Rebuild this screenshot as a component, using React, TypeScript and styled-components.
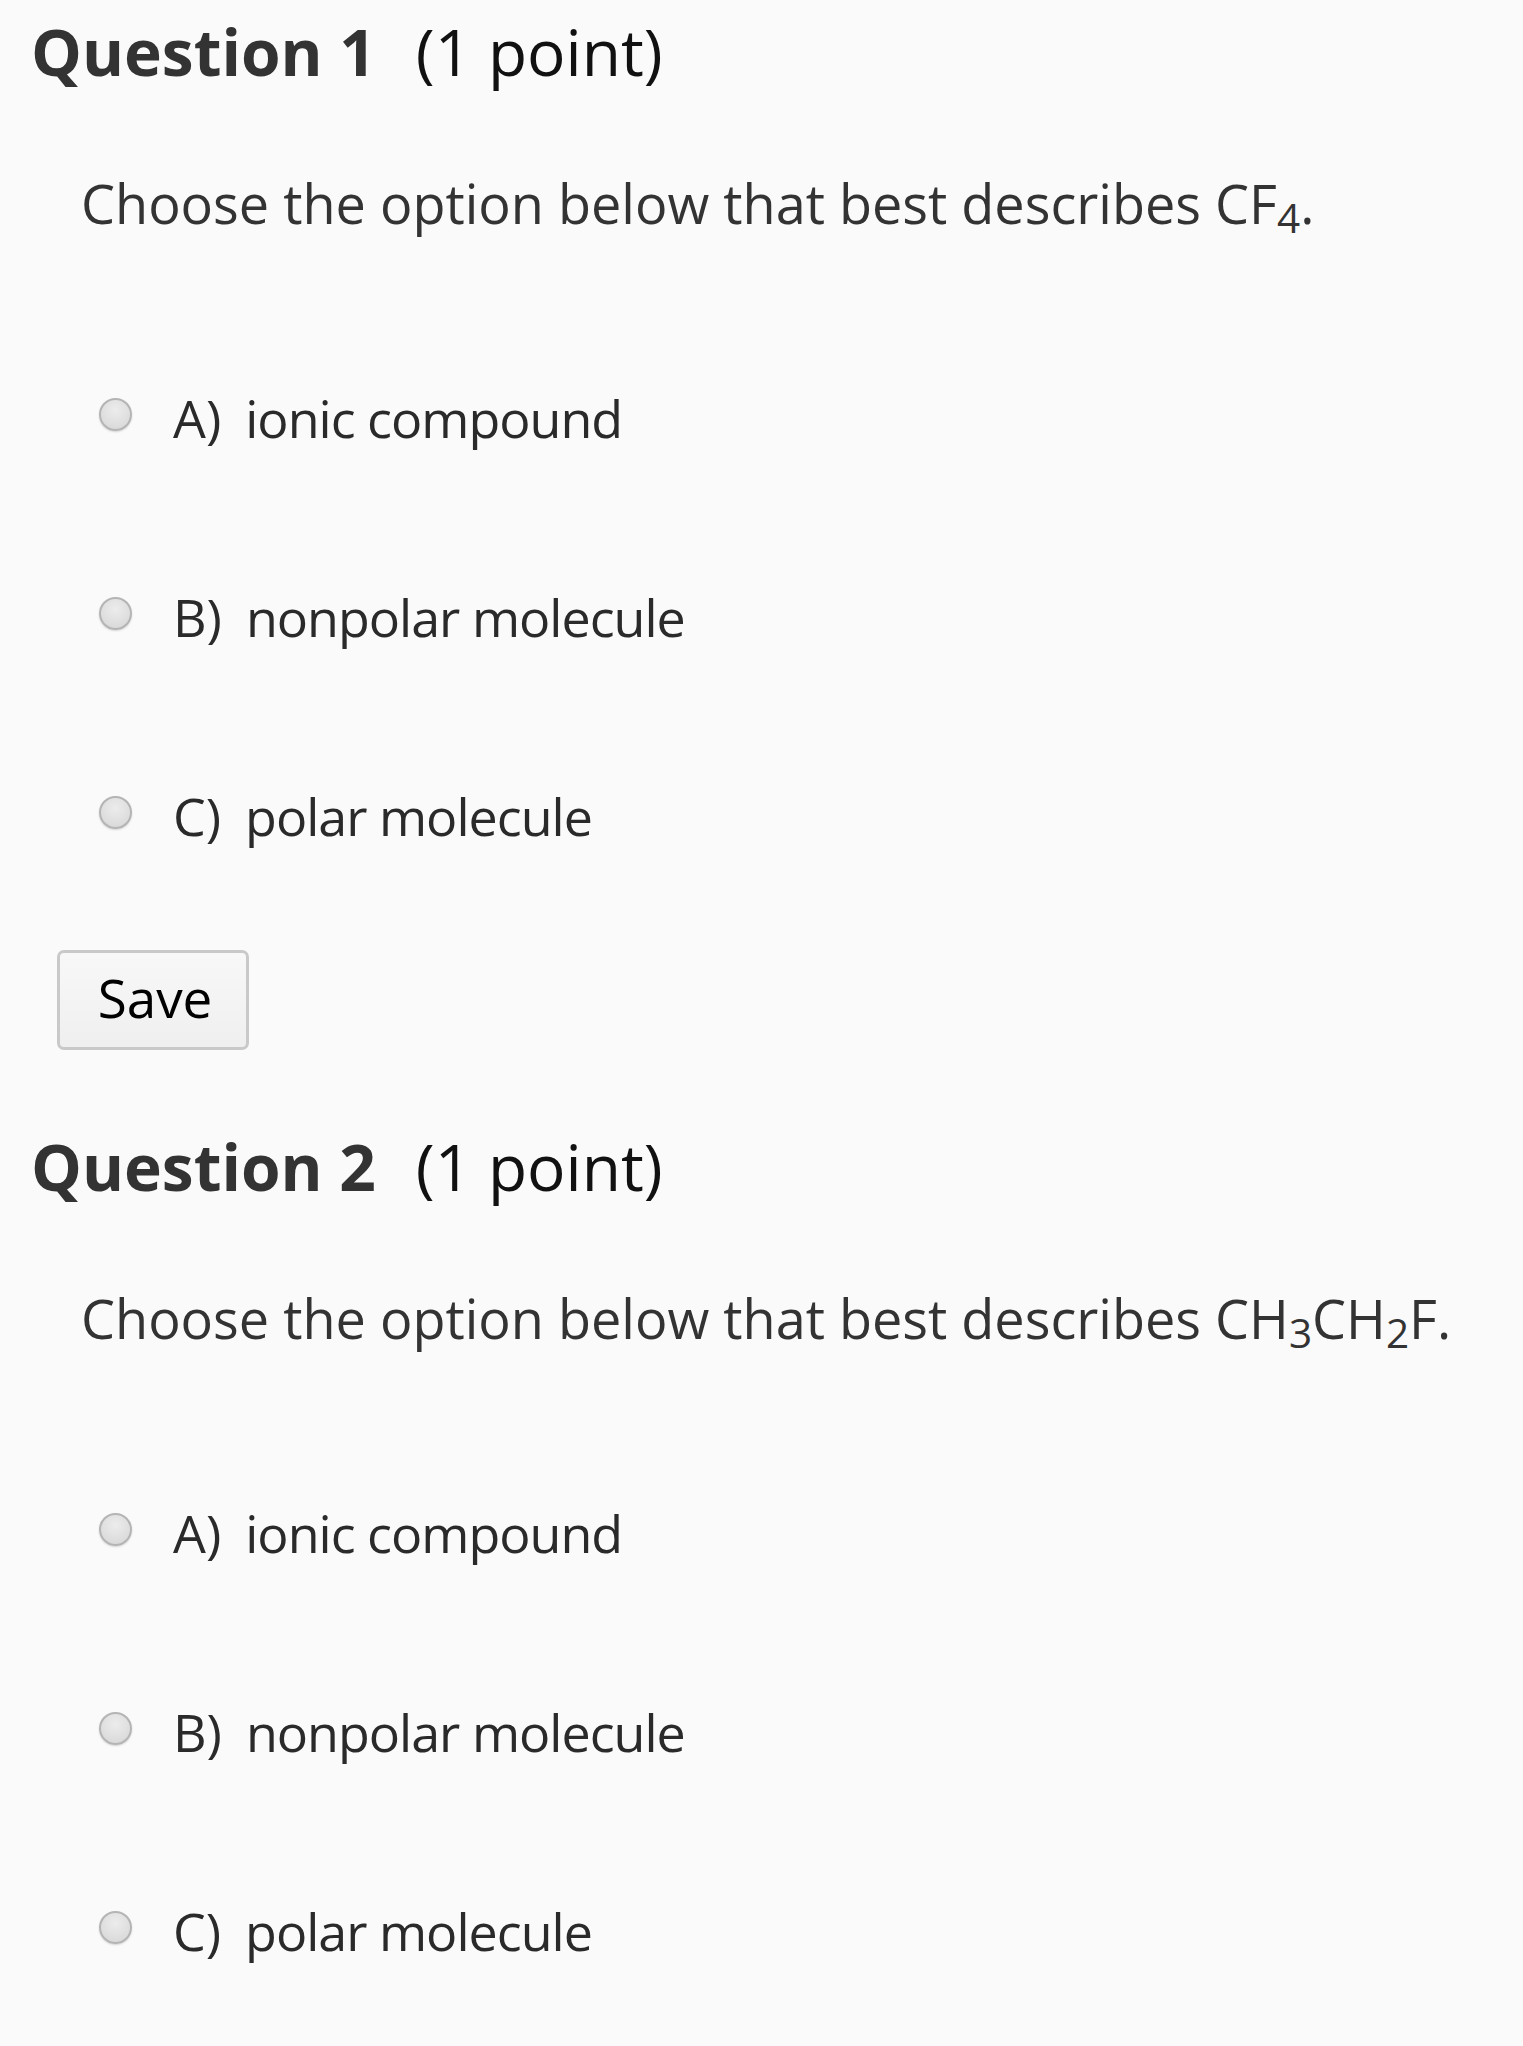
import React from "react";
import styled, { createGlobalStyle } from "styled-components";

const GlobalStyle = createGlobalStyle`
  html, body {
    margin: 0;
    padding: 0;
    background: #fafafa;
  }
  body {
    font-family: "Open Sans", "DejaVu Sans", sans-serif;
    color: #333;
  }
`;

const Page = styled.main`
  display: flex;
  flex-direction: column;
  align-items: flex-start;
  padding: 12px 0 40px 31px;
`;

const Question = styled.section<{ $first?: boolean }>`
  display: flex;
  flex-direction: column;
  align-items: flex-start;
  margin-top: ${(p) => (p.$first ? "0" : "77px")};
`;

const Heading = styled.h2`
  margin: 0;
  font-size: 64px;
  line-height: 80px;
  font-weight: 700;
  color: #333;
  white-space: nowrap;
`;

const Points = styled.span`
  font-weight: 400;
  color: #111;
  margin-left: 40px;
`;

const Prompt = styled.p`
  margin: 76px 0 0 50px;
  font-size: 54px;
  line-height: 70px;
  color: #333;
  white-space: nowrap;

  sub {
    font-size: 0.75em;
    line-height: 0;
    vertical-align: -0.22em;
  }
`;

const Options = styled.div`
  display: flex;
  flex-direction: column;
  gap: 129px;
  margin: 145px 0 0 68px;
`;

const OptionRow = styled.label`
  display: flex;
  align-items: flex-start;
  gap: 41px;
  font-size: 52px;
  line-height: 70px;
  color: #2a2a2a;
  white-space: nowrap;
  cursor: pointer;
`;

const OptionText = styled.span`
  display: flex;
  gap: 24px;
`;

const Letter = styled.span`
  letter-spacing: 0;
`;

const Answer = styled.span`
  letter-spacing: -1px;
`;

const Radio = styled.span`
  flex: none;
  width: 33px;
  height: 33px;
  margin-top: 15px;
  box-sizing: border-box;
  border-radius: 50%;
  border: 2px solid #b4b4b4;
  background: radial-gradient(circle at 50% 35%, #ececec 0%, #dcdcdc 70%, #d2d2d2 100%);
  box-shadow: 0 1px 2px rgba(0, 0, 0, 0.15);
`;

const SaveButton = styled.button`
  margin: 99px 0 0 26px;
  width: 192px;
  height: 100px;
  box-sizing: border-box;
  display: flex;
  align-items: center;
  justify-content: center;
  padding: 0 0 4px 4px;
  border: 3px solid #c9c9c9;
  border-radius: 7px;
  background: linear-gradient(#f8f8f8, #efefef);
  font-family: "Open Sans", "DejaVu Sans", sans-serif;
  font-size: 53px;
  line-height: 60px;
  color: #000;
  cursor: pointer;
`;

type Q = {
  num: number;
  formula: React.ReactNode;
  showSave?: boolean;
};

const OPTIONS: [string, string][] = [
  ["A)", "ionic compound"],
  ["B)", "nonpolar molecule"],
  ["C)", "polar molecule"],
];

const questions: Q[] = [
  {
    num: 1,
    formula: (
      <>
        CF<sub>4</sub>.
      </>
    ),
    showSave: true,
  },
  {
    num: 2,
    formula: (
      <>
        CH<sub>3</sub>CH<sub>2</sub>F.
      </>
    ),
  },
];

export default function App() {
  return (
    <>
      <GlobalStyle />
      <Page>
        {questions.map((q, i) => (
          <Question key={q.num} $first={i === 0}>
            <Heading>
              Question {q.num}
              <Points>(1 point)</Points>
            </Heading>
            <Prompt>Choose the option below that best describes {q.formula}</Prompt>
            <Options>
              {OPTIONS.map(([letter, text]) => (
                <OptionRow key={letter}>
                  <Radio />
                  <OptionText>
                    <Letter>{letter}</Letter>
                    <Answer>{text}</Answer>
                  </OptionText>
                </OptionRow>
              ))}
            </Options>
            {q.showSave && <SaveButton type="button">Save</SaveButton>}
          </Question>
        ))}
      </Page>
    </>
  );
}
